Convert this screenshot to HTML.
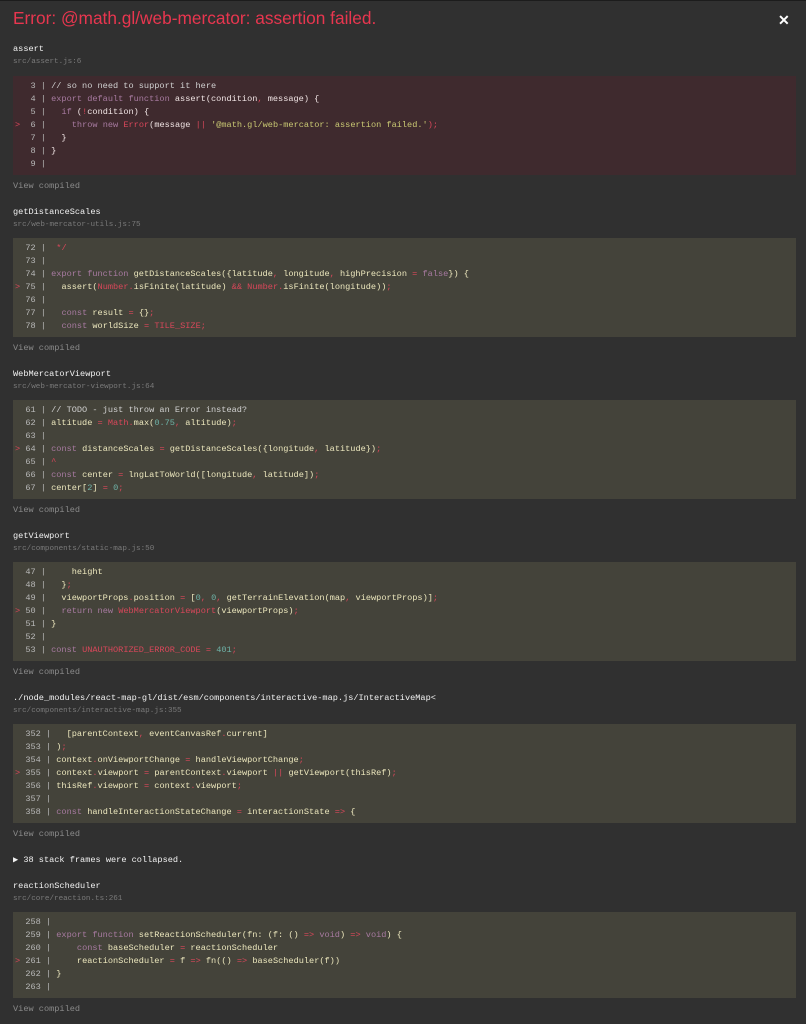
<!DOCTYPE html>
<html><head><meta charset="utf-8"><style>
html,body{margin:0;padding:0;}
body{width:806px;height:1024px;background:#303030;border-top:1px solid #1c1c1c;box-sizing:border-box;position:relative;overflow:hidden;font-family:"Liberation Mono",monospace;}
.t{position:absolute;left:13px;top:7px;font-family:"Liberation Sans",sans-serif;font-size:17.3px;color:#e8364f;white-space:nowrap;}
.x{position:absolute;left:778px;top:11px;color:#fff;font-family:"Liberation Sans",sans-serif;font-size:14px;font-weight:bold;}
.n{position:absolute;left:13px;font-size:8.6px;color:#f2f2f2;white-space:pre;line-height:11px;}
.f{position:absolute;left:13px;font-size:7.6px;color:#7a7a7a;white-space:pre;line-height:10px;}
.v{position:absolute;left:13px;font-size:8.6px;color:#8a8a8a;line-height:11px;}
.b{position:absolute;left:13px;width:783px;background:#44433a;padding:4px 0 4px 0;font-size:8.6px;line-height:13px;white-space:pre;color:#ece7bd;box-sizing:border-box;padding-left:2px;}
.b.e{background:#3f2a2e;color:#f0e4e4;}
.g{color:#b8b8b8;}
.m{color:#d8475a;}
.k{color:#a77aa0;}
.r{color:#d8475a;}
.s{color:#c9c873;}
.u{color:#6fb3a8;}
.c{color:#d0d0d0;}
</style></head><body>
<div class="t">Error: @math.gl/web-mercator: assertion failed.</div>
<div class="x">✕</div>

<div class="n" style="top:43px">assert</div>
<div class="f" style="top:56px">src/assert.js:6</div>
<div class="b e" style="top:75px;height:99px"><span class="g">   3 | </span><span class="c">// so no need to support it here</span>
<span class="g">   4 | </span><span class="k">export default function</span> assert(condition<span class="r">,</span> message) {
<span class="g">   5 | </span>  <span class="k">if</span> (<span class="r">!</span>condition) {
<span class="m">&gt;</span><span class="g">  6 | </span>    <span class="k">throw new</span> <span class="r">Error</span>(message <span class="r">||</span> <span class="s">'@math.gl/web-mercator: assertion failed.'</span><span class="r">);</span>
<span class="g">   7 | </span>  }
<span class="g">   8 | </span>}
<span class="g">   9 | </span></div>
<div class="v" style="top:180px">View compiled</div>

<div class="n" style="top:206px">getDistanceScales</div>
<div class="f" style="top:219px">src/web-mercator-utils.js:75</div>
<div class="b" style="top:237px;height:99px"><span class="g">  72 | </span> <span class="r">*/</span>
<span class="g">  73 | </span>
<span class="g">  74 | </span><span class="k">export function</span> getDistanceScales({latitude<span class="r">,</span> longitude<span class="r">,</span> highPrecision <span class="r">=</span> <span class="k">false</span>}) {
<span class="m">&gt;</span><span class="g"> 75 | </span>  assert(<span class="r">Number.</span>isFinite(latitude) <span class="r">&amp;&amp;</span> <span class="r">Number.</span>isFinite(longitude))<span class="r">;</span>
<span class="g">  76 | </span>
<span class="g">  77 | </span>  <span class="k">const</span> result <span class="r">=</span> {}<span class="r">;</span>
<span class="g">  78 | </span>  <span class="k">const</span> worldSize <span class="r">=</span> <span class="r">TILE_SIZE;</span></div>
<div class="v" style="top:342px">View compiled</div>

<div class="n" style="top:368px">WebMercatorViewport</div>
<div class="f" style="top:381px">src/web-mercator-viewport.js:64</div>
<div class="b" style="top:399px;height:99px"><span class="g">  61 | </span><span class="c">// TODO - just throw an Error instead?</span>
<span class="g">  62 | </span>altitude <span class="r">=</span> <span class="r">Math.</span>max(<span class="u">0.75</span><span class="r">,</span> altitude)<span class="r">;</span>
<span class="g">  63 | </span>
<span class="m">&gt;</span><span class="g"> 64 | </span><span class="k">const</span> distanceScales <span class="r">=</span> getDistanceScales({longitude<span class="r">,</span> latitude})<span class="r">;</span>
<span class="g">  65 | </span><span class="r">^</span>
<span class="g">  66 | </span><span class="k">const</span> center <span class="r">=</span> lngLatToWorld([longitude<span class="r">,</span> latitude])<span class="r">;</span>
<span class="g">  67 | </span>center[<span class="u">2</span>] <span class="r">=</span> <span class="u">0</span><span class="r">;</span></div>
<div class="v" style="top:504px">View compiled</div>

<div class="n" style="top:530px">getViewport</div>
<div class="f" style="top:543px">src/components/static-map.js:50</div>
<div class="b" style="top:561px;height:99px"><span class="g">  47 | </span>    height
<span class="g">  48 | </span>  }<span class="r">;</span>
<span class="g">  49 | </span>  viewportProps<span class="r">.</span>position <span class="r">=</span> [<span class="u">0</span><span class="r">,</span> <span class="u">0</span><span class="r">,</span> getTerrainElevation(map<span class="r">,</span> viewportProps)]<span class="r">;</span>
<span class="m">&gt;</span><span class="g"> 50 | </span>  <span class="k">return new</span> <span class="r">WebMercatorViewport</span>(viewportProps)<span class="r">;</span>
<span class="g">  51 | </span>}
<span class="g">  52 | </span>
<span class="g">  53 | </span><span class="k">const</span> <span class="r">UNAUTHORIZED_ERROR_CODE</span> <span class="r">=</span> <span class="u">401</span><span class="r">;</span></div>
<div class="v" style="top:666px">View compiled</div>

<div class="n" style="top:692px">./node_modules/react-map-gl/dist/esm/components/interactive-map.js/InteractiveMap&lt;</div>
<div class="f" style="top:705px">src/components/interactive-map.js:355</div>
<div class="b" style="top:723px;height:99px"><span class="g">  352 | </span>  [parentContext<span class="r">,</span> eventCanvasRef<span class="r">.</span>current]
<span class="g">  353 | </span>)<span class="r">;</span>
<span class="g">  354 | </span>context<span class="r">.</span>onViewportChange <span class="r">=</span> handleViewportChange<span class="r">;</span>
<span class="m">&gt;</span><span class="g"> 355 | </span>context<span class="r">.</span>viewport <span class="r">=</span> parentContext<span class="r">.</span>viewport <span class="r">||</span> getViewport(thisRef)<span class="r">;</span>
<span class="g">  356 | </span>thisRef<span class="r">.</span>viewport <span class="r">=</span> context<span class="r">.</span>viewport<span class="r">;</span>
<span class="g">  357 | </span>
<span class="g">  358 | </span><span class="k">const</span> handleInteractionStateChange <span class="r">=</span> interactionState <span class="r">=&gt;</span> {</div>
<div class="v" style="top:828px">View compiled</div>

<div class="n" style="top:854px">▶ 38 stack frames were collapsed.</div>

<div class="n" style="top:880px">reactionScheduler</div>
<div class="f" style="top:893px">src/core/reaction.ts:261</div>
<div class="b" style="top:911px;height:86px"><span class="g">  258 | </span>
<span class="g">  259 | </span><span class="k">export function</span> setReactionScheduler(fn: (f: () <span class="r">=&gt;</span> <span class="k">void</span>) <span class="r">=&gt;</span> <span class="k">void</span>) {
<span class="g">  260 | </span>    <span class="k">const</span> baseScheduler <span class="r">=</span> reactionScheduler
<span class="m">&gt;</span><span class="g"> 261 | </span>    reactionScheduler <span class="r">=</span> f <span class="r">=&gt;</span> fn(() <span class="r">=&gt;</span> baseScheduler(f))
<span class="g">  262 | </span>}
<span class="g">  263 | </span></div>
<div class="v" style="top:1003px">View compiled</div>
</body></html>
